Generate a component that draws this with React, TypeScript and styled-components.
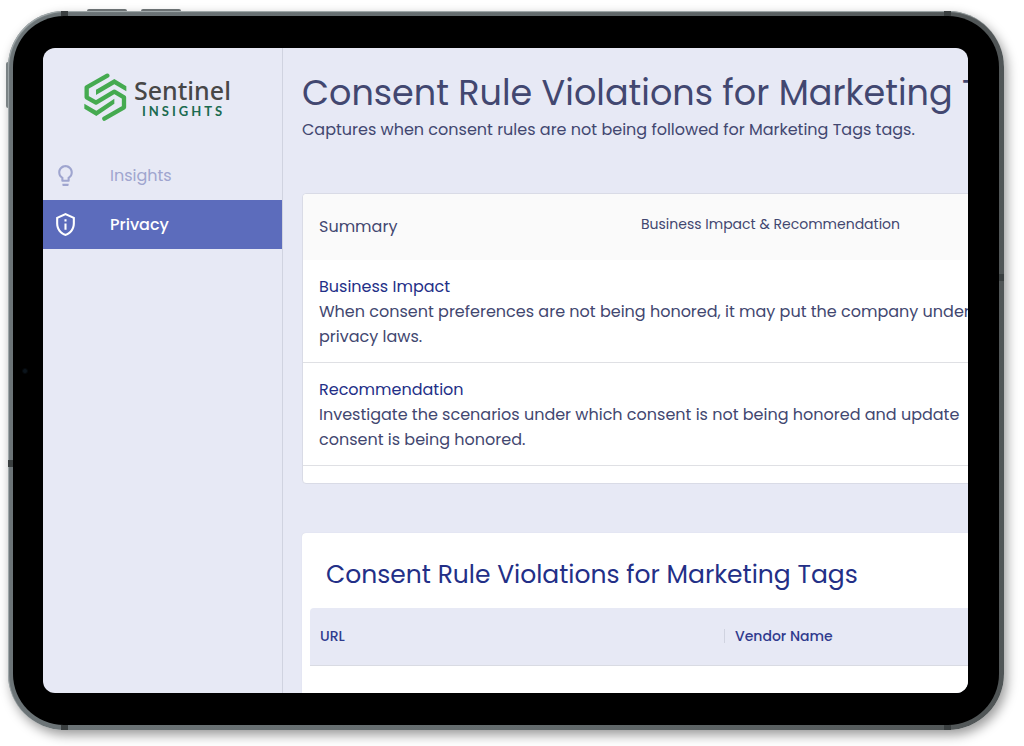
import React from 'react';
import styled, { createGlobalStyle } from 'styled-components';
import { MdLightbulbOutline, MdOutlinePrivacyTip } from 'react-icons/md';

const GlobalStyle = createGlobalStyle`
  * { box-sizing: border-box; }
  body {
    margin: 0;
    background: #fff;
    color: #424770;
    font-family: Poppins, Inter, "Liberation Sans", sans-serif;
    font-size: 16px;
    line-height: 25px;
  }
  h1, h2, h3, p { margin: 0; font-weight: 400; }
`;

const Stage = styled.div`
  display: flex;
  height: 100vh;
  min-height: 560px;
  padding: 11px 20px 16px 8px;
  overflow: hidden;
`;

const Device = styled.div`
  position: relative;
  display: flex;
  flex: 1;
  min-width: 0;
  padding: 5px;
  border-radius: 56px;
  background: linear-gradient(90deg, #6c7477, #646c6e 50%, #505556);
  box-shadow: 3px 5px 12px rgba(0, 0, 0, 0.4), inset 1px 1px 1px #a5adaf;
`;

const Bezel = styled.div`
  position: relative;
  display: flex;
  flex: 1;
  min-width: 0;
  padding: 32px 31px 32px 30px;
  border-radius: 51px;
  background: #000;
`;

const Band = styled.span<{ $side: 'top' | 'bottom' | 'left' | 'right'; $at: 'start' | 'end' }>`
  position: absolute;
  background: #3a3f40;
  ${({ $side }) => `${$side}: 0;`}
  ${({ $side, $at }) =>
    $side === 'top' || $side === 'bottom'
      ? `width: 7px; height: 5px; ${$at === 'start' ? 'left' : 'right'}: 53px;`
      : `width: 5px; height: 7px; ${$at === 'start' ? 'top' : 'bottom'}: 263px;`}
`;

const TopKey = styled.span<{ $left: number }>`
  position: absolute;
  top: -2px;
  left: ${({ $left }) => $left}px;
  width: 40px;
  height: 2px;
  border-radius: 2px 2px 0 0;
  background: #6b7173;
`;

const SideKey = styled.span`
  position: absolute;
  top: 51px;
  left: -2px;
  width: 2px;
  height: 46px;
  border-radius: 2px 0 0 2px;
  background: #7b8385;
`;

const Camera = styled.span`
  position: absolute;
  top: calc(50% - 3px);
  left: 9px;
  width: 6px;
  height: 6px;
  border-radius: 50%;
  background: #0b141c;
  border: 1px solid #05080b;
`;

const Screen = styled.div`
  display: flex;
  flex: 1;
  min-width: 0;
  overflow: hidden;
  border-radius: 12px;
  background: #e7e9f5;
`;

const Sidebar = styled.aside`
  flex: 0 0 240px;
  border-right: 1px solid #d0d3e0;
`;

const Brand = styled.a`
  display: flex;
  align-items: center;
  gap: 7px;
  height: 103px;
  padding: 0 0 6px 41px;
  text-decoration: none;
`;

const BrandText = styled.span`
  display: flex;
  flex-direction: column;
  font-family: "Noto Sans", "Open Sans", sans-serif;
`;

const BrandName = styled.span`
  color: #474747;
  font-size: 25px;
  font-weight: 500;
  line-height: 28px;
`;

const BrandSub = styled.span`
  padding-left: 8px;
  color: #1b6b50;
  font-family: Lato, sans-serif;
  font-size: 13px;
  font-weight: 700;
  letter-spacing: 3px;
  line-height: 14px;
`;

const NavItem = styled.a<{ $active?: boolean }>`
  display: flex;
  align-items: center;
  gap: 32px;
  height: 49px;
  padding-left: 10px;
  color: ${({ $active }) => ($active ? '#fff' : '#9fa5cf')};
  background: ${({ $active }) => ($active ? '#5c6cbc' : 'transparent')};
  font-weight: ${({ $active }) => ($active ? 500 : 400)};
  text-decoration: none;
`;

const Content = styled.main`
  flex: 1;
  min-width: 0;
  padding: 21px 0 0 19px;
  white-space: nowrap;
`;

const Title = styled.h1`
  font-size: 35px;
  line-height: 48px;
`;

const Card = styled.section`
  width: 960px;
  border: 1px solid #d9dbe6;
  border-radius: 4px;
  background: #fff;
`;

const SummaryCard = styled(Card)`
  margin-top: 51px;
  padding-bottom: 17px;
`;

const SummaryHead = styled.header`
  display: grid;
  grid-template-columns: 322px 1fr;
  align-items: center;
  height: 66px;
  padding: 0 0 2px 16px;
  border-radius: 4px 4px 0 0;
  background: #fafafa;
`;

const HeadNote = styled.span`
  padding-bottom: 4px;
  font-size: 14px;
`;

const Entry = styled.article`
  padding: 14px 16px 13px;
  border-bottom: 1px solid #dfe0e4;
`;

const EntryTitle = styled.h3`
  color: #232f87;
  font-size: 16px;
`;

const TableCard = styled(Card)`
  height: 400px;
  margin-top: 49px;
  padding: 25px 8px;
  border: 0;
  box-shadow: 0 0 1px #c9ccda;
`;

const TableTitle = styled.h2`
  padding-left: 16px;
  color: #232f87;
  font-size: 25px;
  line-height: 34px;
`;

const Table = styled.table`
  width: 100%;
  margin-top: 16px;
  border-spacing: 0;
  table-layout: fixed;
`;

const HeadCell = styled.th<{ $width?: number }>`
  width: ${({ $width }) => ($width ? `${$width}px` : 'auto')};
  height: 58px;
  padding: 0 10px 2px;
  border-bottom: 1px solid #d9dbe3;
  background: #e7e9f5;
  color: #303b8e;
  font-size: 14px;
  font-weight: 500;
  text-align: left;

  &:first-child { border-top-left-radius: 4px; }
`;

const CellLabel = styled.span<{ $divided?: boolean }>`
  display: block;
  margin-left: ${({ $divided }) => ($divided ? '-10px' : '0')};
  padding-left: ${({ $divided }) => ($divided ? '10px' : '0')};
  border-left: ${({ $divided }) => ($divided ? '1px solid #d0d3e0' : '0')};
  line-height: 14px;
`;

const LogoMark = () => (
  <svg width="43" height="48" viewBox="24 20 129 144" fill="#45aa50" aria-hidden="true">
    <path
      d="M94 28 L32 63 V93 L60 109 L115 76 L144 93 V123 L85 157"
      fill="none"
      stroke="#45aa50"
      strokeWidth="13"
      strokeLinejoin="round"
      strokeLinecap="round"
    />
    <path d="M60 70 L115 38 L151 60 V75 L115 54 L60 86 Z" />
    <path d="M25 112 L61 133 L115 97 V112 L61 149 L25 127 Z" />
  </svg>
);

const entries = [
  {
    title: 'Business Impact',
    lines: [
      'When consent preferences are not being honored, it may put the company under',
      'privacy laws.',
    ],
  },
  {
    title: 'Recommendation',
    lines: [
      'Investigate the scenarios under which consent is not being honored and update',
      'consent is being honored.',
    ],
  },
];

export default function App() {
  return (
    <Stage>
      <GlobalStyle />
      <Device>
        <TopKey $left={79} />
        <TopKey $left={133} />
        <SideKey />
        <Band $side="top" $at="start" />
        <Band $side="top" $at="end" />
        <Band $side="bottom" $at="start" />
        <Band $side="bottom" $at="end" />
        <Band $side="left" $at="end" />
        <Band $side="right" $at="start" />
        <Bezel>
          <Camera />
          <Screen>
            <Sidebar>
              <Brand href="#home">
                <LogoMark />
                <BrandText>
                  <BrandName>Sentinel</BrandName>
                  <BrandSub>INSIGHTS</BrandSub>
                </BrandText>
              </Brand>
              <nav>
                <NavItem href="#insights">
                  <MdLightbulbOutline size={25} />
                  Insights
                </NavItem>
                <NavItem href="#privacy" $active aria-current="page">
                  <MdOutlinePrivacyTip size={25} />
                  Privacy
                </NavItem>
              </nav>
            </Sidebar>
            <Content>
              <Title>Consent Rule Violations for Marketing Tags</Title>
              <p>Captures when consent rules are not being followed for Marketing Tags tags.</p>
              <SummaryCard>
                <SummaryHead>
                  <span>Summary</span>
                  <HeadNote>Business Impact &amp; Recommendation</HeadNote>
                </SummaryHead>
                {entries.map((entry) => (
                  <Entry key={entry.title}>
                    <EntryTitle>{entry.title}</EntryTitle>
                    {entry.lines.map((line) => (
                      <p key={line}>{line}</p>
                    ))}
                  </Entry>
                ))}
              </SummaryCard>
              <TableCard>
                <TableTitle>Consent Rule Violations for Marketing Tags</TableTitle>
                <Table>
                  <thead>
                    <tr>
                      <HeadCell $width={414}>
                        <CellLabel>URL</CellLabel>
                      </HeadCell>
                      <HeadCell>
                        <CellLabel $divided>Vendor Name</CellLabel>
                      </HeadCell>
                    </tr>
                  </thead>
                </Table>
              </TableCard>
            </Content>
          </Screen>
        </Bezel>
      </Device>
    </Stage>
  );
}
